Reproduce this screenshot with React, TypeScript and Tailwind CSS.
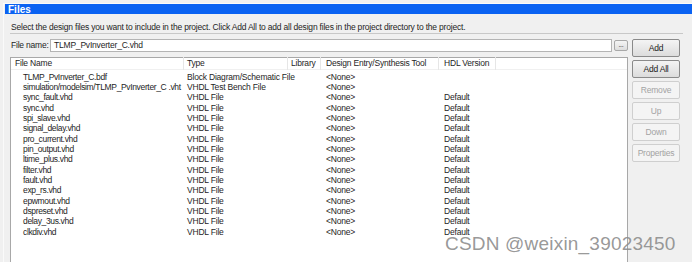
import React from 'react';

// Quartus "Files" page of the project settings dialog

interface FileRow {
  name: string;
  type: string;
  tool: string;
  hdl: string;
}

const files: FileRow[] = [
  { name: 'TLMP_PvInverter_C.bdf', type: 'Block Diagram/Schematic File', tool: '<None>', hdl: '' },
  { name: 'simulation/modelsim/TLMP_PvInverter_C .vht', type: 'VHDL Test Bench File', tool: '<None>', hdl: '' },
  { name: 'sync_fault.vhd', type: 'VHDL File', tool: '<None>', hdl: 'Default' },
  { name: 'sync.vhd', type: 'VHDL File', tool: '<None>', hdl: 'Default' },
  { name: 'spi_slave.vhd', type: 'VHDL File', tool: '<None>', hdl: 'Default' },
  { name: 'signal_delay.vhd', type: 'VHDL File', tool: '<None>', hdl: 'Default' },
  { name: 'pro_current.vhd', type: 'VHDL File', tool: '<None>', hdl: 'Default' },
  { name: 'pin_output.vhd', type: 'VHDL File', tool: '<None>', hdl: 'Default' },
  { name: 'ltime_plus.vhd', type: 'VHDL File', tool: '<None>', hdl: 'Default' },
  { name: 'filter.vhd', type: 'VHDL File', tool: '<None>', hdl: 'Default' },
  { name: 'fault.vhd', type: 'VHDL File', tool: '<None>', hdl: 'Default' },
  { name: 'exp_rs.vhd', type: 'VHDL File', tool: '<None>', hdl: 'Default' },
  { name: 'epwmout.vhd', type: 'VHDL File', tool: '<None>', hdl: 'Default' },
  { name: 'dspreset.vhd', type: 'VHDL File', tool: '<None>', hdl: 'Default' },
  { name: 'delay_3us.vhd', type: 'VHDL File', tool: '<None>', hdl: 'Default' },
  { name: 'clkdiv.vhd', type: 'VHDL File', tool: '<None>', hdl: 'Default' },
];

const buttons = [
  { label: 'Add', enabled: true },
  { label: 'Add All', enabled: true },
  { label: 'Remove', enabled: false },
  { label: 'Up', enabled: false },
  { label: 'Down', enabled: false },
  { label: 'Properties', enabled: false },
];

function SideButton({ label, enabled }: { label: string; enabled: boolean }) {
  return enabled ? (
    <div className="h-[18px] w-[48px] flex items-center justify-center rounded-[2px] border border-[#8a8a8a] bg-gradient-to-b from-[#f4f4f4] to-[#dcdcdc] text-[#1a1a1a]">
      {label}
    </div>
  ) : (
    <div className="h-[18px] w-[48px] flex items-center justify-center rounded-[2px] border border-[#cfcfcf] bg-[#f4f4f4] text-[#a3a3a3]">
      {label}
    </div>
  );
}

export default function App() {
  return (
    <div
      className="relative w-[692px] h-[262px] overflow-hidden bg-[#f0f0f0] text-[8.5px] tracking-[-0.2px] text-[#1e1e1e] pl-[3px] pt-[3px] whitespace-nowrap"
      style={{ fontFamily: '"Liberation Sans", Arial, sans-serif' }}
    >
      <div className="h-full border-l border-t border-[#fafafa]">
        {/* title bar */}
        <div className="ml-[1px] h-[10px] bg-[#0a62f2] pl-[3px] flex items-center text-white font-bold text-[10px] tracking-normal">
          Files
        </div>

        <div className="pl-[6px]">
          <div className="pt-[7px] pl-[1px] h-[19px]">
            Select the design files you want to include in the project. Click Add All to add all design files in the project directory to the project.
          </div>
          <div className="mr-[9px] h-[1px] bg-[#c8c8c8]" />

          <div className="flex mt-[5px]">
            <div className="w-[618px]">
              {/* file name row */}
              <div className="flex items-center h-[13px]">
                <span className="w-[40px] pl-[1px]">File name:</span>
                <div className="w-[562px] h-[13px] bg-white border border-[#b4b4b4] flex items-center pl-[3px]">
                  TLMP_PvInverter_C.vhd
                </div>
                <div className="ml-[2px] w-[14px] h-[11px] rounded-[2px] border border-[#a8a8a8] bg-gradient-to-b from-[#f4f4f4] to-[#dedede] flex items-center justify-center text-[7px] leading-none pb-[3px]">
                  ...
                </div>
              </div>

              {/* file table */}
              <div className="mt-[5px] h-[220px] bg-white border border-[#a8a8a8]">
                <div className="flex h-[12px] items-center border-b border-[#f0f0f0]">
                  <div className="w-[173px] pl-[4px] border-r border-[#e6e6e6]">File Name</div>
                  <div className="w-[104px] pl-[3px] border-r border-[#e6e6e6]">Type</div>
                  <div className="w-[33px] pl-[3px] border-r border-[#e6e6e6]">Library</div>
                  <div className="w-[118px] pl-[5px] border-r border-[#e6e6e6]">Design Entry/Synthesis Tool</div>
                  <div className="w-[57px] pl-[5px] border-r border-[#e6e6e6]">HDL Version</div>
                </div>
                <div className="pt-[2px]">
                  {files.map((f) => (
                    <div key={f.name} className="flex h-[10.33px] items-center">
                      <div className="w-[173px] shrink-0 pl-[12px] tracking-[-0.35px]">{f.name}</div>
                      <div className="w-[104px] shrink-0 pl-[3px]">{f.type}</div>
                      <div className="w-[33px] shrink-0" />
                      <div className="w-[118px] shrink-0 pl-[5px]">{f.tool}</div>
                      <div className="w-[57px] shrink-0 pl-[5px]">{f.hdl}</div>
                    </div>
                  ))}
                </div>
              </div>
            </div>

            {/* buttons */}
            <div className="ml-[4px] flex flex-col gap-[3px]">
              {buttons.map((b) => (
                <SideButton key={b.label} label={b.label} enabled={b.enabled} />
              ))}
            </div>
          </div>
        </div>
      </div>

      <div className="absolute left-[445px] top-[234px] leading-none text-[19px] tracking-[0.2px] text-[#8c8c8c]/90">
        CSDN @weixin_39023450
      </div>
    </div>
  );
}
